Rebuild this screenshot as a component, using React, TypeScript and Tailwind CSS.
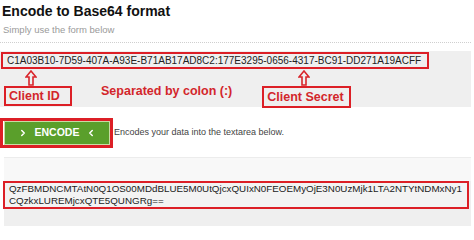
import { ChevronLeft, ChevronRight } from 'lucide-react'

const red = 'border-[#dc1f26]'

function UpArrow({ className = '' }: { className?: string }) {
  return (
    <svg width="12" height="16" viewBox="0 0 12 16" className={className}>
      <path d="M6 1 L11 7 L8 7 L8 15 L4 15 L4 7 L1 7 Z" fill="none" stroke="#d9252b" strokeWidth="1.6" strokeLinejoin="miter" />
    </svg>
  )
}

export default function App() {
  return (
    <div className="w-[474px] h-[226px] overflow-hidden bg-white font-['Liberation_Sans',Arial,sans-serif]">
      {/* header */}
      <h1 className="mt-[3px] pl-[2px] text-[14px] leading-[16px] font-bold text-[#111]">Encode to Base64 format</h1>
      <p className="mt-[5px] pl-[3px] text-[9.5px] leading-[12px] text-[#9a9a9a]">Simply use the form below</p>
      <div className="mt-[6px] w-[471px] border-t border-dotted border-[#cfcfcf]" />

      {/* input panel */}
      <div className="mt-[8px] w-[471px] h-[56px] bg-[#efefef] pt-[1px]">
        <div className={`ml-[1px] w-[428px] h-[17px] border-2 ${red} pl-[4px] text-[10px] leading-[13px] text-[#222] whitespace-nowrap overflow-hidden`}>
          C1A03B10-7D59-407A-A93E-B71AB17AD8C2:177E3295-0656-4317-BC91-DD271A19ACFF
        </div>
        <div className="flex items-start">
          <div className="ml-[4px] flex flex-col">
            <UpArrow className="ml-[21px] mt-[1px]" />
            <div className={`w-[68px] h-[20px] border-2 ${red} pl-[3px] text-[12.5px] leading-[16px] font-bold text-[#d3262b]`}>Client ID</div>
          </div>
          <div className="ml-[29px] mt-[14px] text-[12.5px] leading-[16px] font-bold text-[#d3262b]">Separated by colon (:)</div>
          <div className="ml-[30px] flex flex-col">
            <UpArrow className="ml-[36px] mt-[1px]" />
            <div className={`w-[89px] h-[22px] border-2 ${red} pl-[3px] pt-[1px] text-[12.5px] leading-[16px] font-bold text-[#d3262b]`}>Client Secret</div>
          </div>
        </div>
      </div>

      {/* encode button */}
      <div className="mt-[11px] flex items-center">
        <div className={`w-[113px] h-[30px] border-[3px] ${red} pl-[1px]`}>
          <button className="w-[106px] h-[24px] bg-[#5a9f2b] border border-[#c8dca4] flex items-center justify-center gap-[7px] text-white text-[10.5px] font-bold">
            <ChevronRight className="w-[10px] h-[10px]" strokeWidth={3.5} />
            ENCODE
            <ChevronLeft className="w-[10px] h-[10px]" strokeWidth={3.5} />
          </button>
        </div>
        <span className="ml-[1px] text-[9px] text-[#444]">Encodes your data into the textarea below.</span>
      </div>

      {/* output panel */}
      <div className="mt-[9px] ml-[4px] w-[467px] h-[80px] bg-[#efefef]">
        <div className="h-[24px] bg-[#f8f8f8] border-t border-[#ececec]" />
        <div className={`-ml-[1px] w-[466px] h-[28px] border-2 ${red} bg-[#f3f3f3] pl-[4px] text-[9.8px] leading-[12px] text-[#222] whitespace-nowrap overflow-hidden`}>
          QzFBMDNCMTAtN0Q1OS00MDdBLUE5M0UtQjcxQUIxN0FEOEMyOjE3N0UzMjk1LTA2NTYtNDMxNy1
          <br />
          CQzkxLUREMjcxQTE5QUNGRg==
        </div>
      </div>
    </div>
  )
}
